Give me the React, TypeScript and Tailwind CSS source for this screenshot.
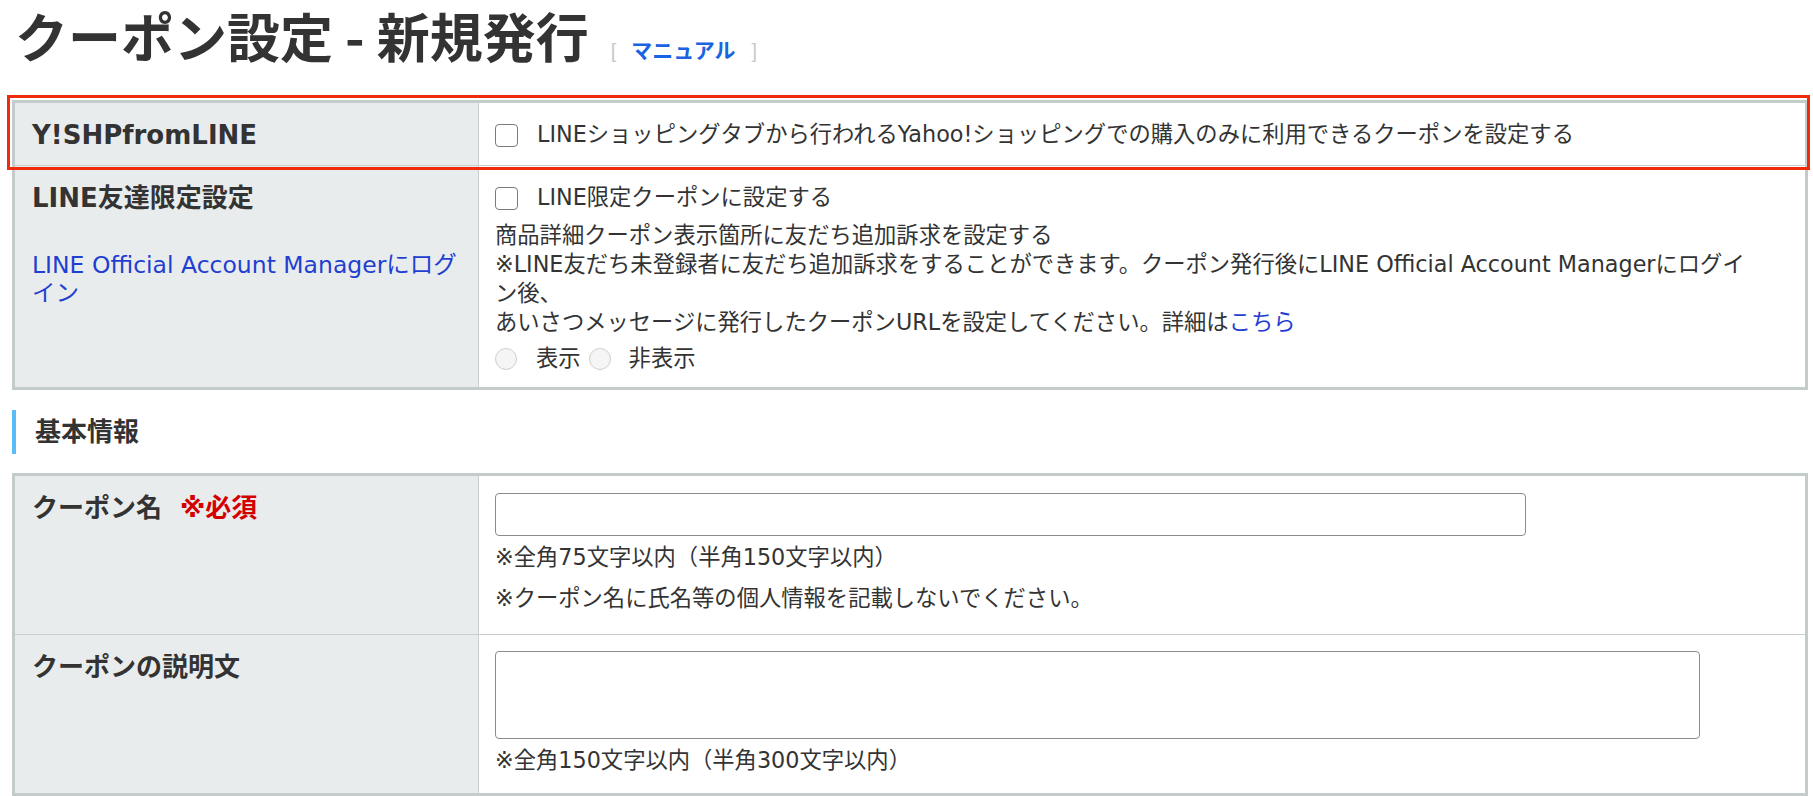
function CheckBox() {
  return (
    <span className="inline-block h-[23px] w-[23px] shrink-0 rounded-[4px] border-[1.5px] border-[#7b7b7b] bg-white" />
  );
}

function Radio() {
  return (
    <span className="inline-block h-[22px] w-[22px] shrink-0 rounded-full border border-[#cfcfcf] bg-[#f5f5f5]" />
  );
}

export default function App() {
  return (
    <div className="min-h-screen bg-white pt-[9px] font-['DejaVu_Sans','Noto_Sans_CJK_JP',sans-serif] text-[#333]">
      {/* title */}
      <div className="flex h-[53px] items-baseline pl-[15px]">
        <h1 className="font-['Noto_Sans_CJK_JP',sans-serif] text-[53px] font-bold leading-[53px] text-[#333]">
          クーポン設定 - 新規発行
        </h1>
        <span className="ml-[22px] font-['Liberation_Sans',sans-serif] text-[20px] text-[#c9c9c9]">[</span>
        <a href="#" className="ml-[15px] font-['Noto_Sans_CJK_JP',sans-serif] text-[21px] font-bold text-[#1a63e2]">
          マニュアル
        </a>
        <span className="ml-[16px] font-['Liberation_Sans',sans-serif] text-[20px] text-[#c9c9c9]">]</span>
      </div>

      {/* LINE table */}
      <div className="relative ml-[12px] mr-[5px] mt-[38px]">
        <div className="border-[3px] border-[#c4cccb]">
          <div className="grid grid-cols-[463px_1fr] border-b border-[#c9cfce]">
            <div className="bg-[#e9ecec] px-[17px] pb-[14px] pt-[16px] text-[26px] font-bold leading-[32px]">
              Y!SHPfromLINE
            </div>
            <div className="border-l border-[#c9cfce] px-[16px] pb-[14px] pt-[16px]">
              <label className="flex h-[32px] items-center gap-[19px] text-[22.3px]">
                <CheckBox />
                <span className="whitespace-nowrap">
                  LINEショッピングタブから行われるYahoo!ショッピングでの購入のみに利用できるクーポンを設定する
                </span>
              </label>
            </div>
          </div>

          <div className="grid grid-cols-[463px_1fr]">
            <div className="bg-[#e9ecec] px-[17px] pt-[16px]">
              <div className="text-[26px] font-bold leading-[32px]">LINE友達限定設定</div>
              <a href="#" className="mt-[37px] block whitespace-nowrap text-[23.5px] leading-[28px] text-[#1f3fd1]">
                LINE Official Account Managerにログ
                <br />
                イン
              </a>
            </div>
            <div className="border-l border-[#c9cfce] px-[16px] pb-[14px] pt-[16px] text-[22.3px]">
              <label className="flex h-[32px] items-center gap-[19px]">
                <CheckBox />
                <span>LINE限定クーポンに設定する</span>
              </label>
              <p className="mt-[7px] whitespace-nowrap leading-[29px]">
                商品詳細クーポン表示箇所に友だち追加訴求を設定する
                <br />
                ※LINE友だち未登録者に友だち追加訴求をすることができます。クーポン発行後にLINE Official Account Managerにログイ
                <br />
                ン後、
                <br />
                あいさつメッセージに発行したクーポンURLを設定してください。詳細は
                <a href="#" className="text-[#1f3fd1]">
                  こちら
                </a>
              </p>
              <div className="mt-[8px] flex h-[28px] items-center">
                <Radio />
                <span className="ml-[19px]">表示</span>
                <span className="ml-[8px] flex">
                  <Radio />
                </span>
                <span className="ml-[18px]">非表示</span>
              </div>
            </div>
          </div>
        </div>

        {/* highlight */}
        <div className="pointer-events-none absolute -left-[5px] -right-[2px] -top-[5px] h-[75px] border-[3px] border-[#f22a0c]" />
      </div>

      {/* section heading */}
      <div className="ml-[12px] mt-[20px] flex h-[44px] items-center border-l-4 border-[#5cbcf7] pl-[19px]">
        <h2 className="text-[26px] font-bold leading-[44px]">基本情報</h2>
      </div>

      {/* basic info table */}
      <div className="ml-[12px] mr-[5px] mt-[19px] border-[3px] border-[#c4cccb]">
        <div className="grid grid-cols-[463px_1fr] border-b border-[#c9cfce]">
          <div className="bg-[#e9ecec] px-[17px] pt-[16px] text-[26px] font-bold leading-[32px]">
            クーポン名
            <span className="ml-[18px] text-[#d40000]">※必須</span>
          </div>
          <div className="border-l border-[#c9cfce] px-[16px] pb-[22px] pt-[17px] text-[22.3px]">
            <input
              type="text"
              className="block h-[43px] w-[1031px] rounded-[4px] border-[1.5px] border-[#8c8c8c] bg-white px-2 outline-none"
            />
            <p className="mt-[7px] leading-[28px]">※全角75文字以内（半角150文字以内）</p>
            <p className="mt-[13px] leading-[28px]">※クーポン名に氏名等の個人情報を記載しないでください。</p>
          </div>
        </div>

        <div className="grid grid-cols-[463px_1fr]">
          <div className="bg-[#e9ecec] px-[17px] pt-[16px] text-[26px] font-bold leading-[32px]">
            クーポンの説明文
          </div>
          <div className="border-l border-[#c9cfce] px-[16px] pb-[19px] pt-[16px] text-[22.3px]">
            <textarea className="block h-[88px] w-[1205px] resize-none rounded-[4px] border-[1.5px] border-[#8c8c8c] bg-white px-2 outline-none" />
            <p className="mt-[7px] leading-[28px]">※全角150文字以内（半角300文字以内）</p>
          </div>
        </div>
      </div>
    </div>
  );
}
